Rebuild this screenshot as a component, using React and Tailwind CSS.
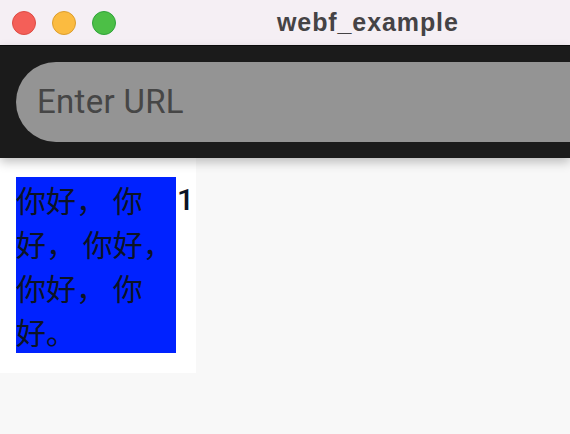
import React from "react";

const TrafficLights = () => {
  return (
    <div className="flex items-center gap-4 pl-3">
      <span className="h-6 w-6 rounded-full border border-[#dd4b43] bg-[#f45f58]" />
      <span className="h-6 w-6 rounded-full border border-[#dc9d2c] bg-[#fbbb40]" />
      <span className="h-6 w-6 rounded-full border border-[#2fa33a] bg-[#4cbf46]" />
    </div>
  );
};

const App = () => {
  return (
    <div className="flex h-[434px] w-full flex-col overflow-hidden bg-[#f8f8f8]">
      {/* window title bar */}
      <div className="flex h-[45px] shrink-0 items-center bg-[#f5eff4]">
        <TrafficLights />
        <span
          className="ml-[161px] text-[25px] font-bold tracking-[0.9px] text-[#454345]"
          style={{ fontFamily: '"Liberation Sans", Arial, sans-serif' }}
        >
          webf_example
        </span>
      </div>
      <div className="h-px shrink-0 bg-[#0c0c0c]" />

      {/* url bar */}
      <div className="relative z-10 h-[112px] shrink-0 bg-[#1b1b1b] pl-4 pt-4 shadow-[0_4px_10px_rgba(0,0,0,0.25)]">
        <div className="flex h-20 w-full items-center rounded-l-full bg-[#949494] pl-[21px]">
          <span
            className="text-[33px] tracking-[0.3px] text-[#464646]"
            style={{ fontFamily: "Roboto, sans-serif" }}
          >
            Enter URL
          </span>
        </div>
      </div>

      {/* page content */}
      <div className="flex-1">
        <div className="w-[196px] bg-white pb-5 pl-4 pt-[19px]">
          <div className="flex items-start">
            <div
              className="w-[160px] bg-[#0022ff] text-[30px] leading-[44px] text-[#0c1324]"
              style={{ fontFamily: '"Noto Sans CJK SC", sans-serif' }}
            >
              你好， 你好， 你好， 你好， 你好。
            </div>
            <span
              className="ml-px text-[30px] font-medium text-[#0c1324]"
              style={{ fontFamily: "Roboto, sans-serif" }}
            >
              1
            </span>
          </div>
        </div>
      </div>
    </div>
  );
};

export default App;
